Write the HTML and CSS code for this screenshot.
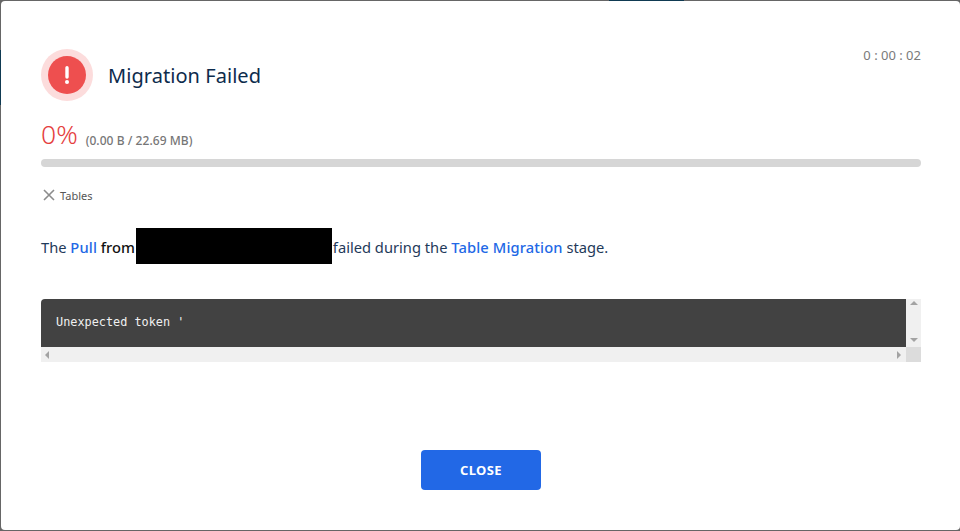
FILE: index.html
```html
<!DOCTYPE html>
<html lang="en">
<head>
<meta charset="utf-8">
<title>Migration Failed</title>
<link rel="stylesheet" href="styles.css">
</head>
<body>
<span class="sliver sliver-top"></span>
<span class="sliver sliver-left"></span>
<main class="modal">
  <header class="head">
    <div class="title-wrap">
      <span class="status-icon">
        <svg width="52" height="52" viewBox="0 0 52 52" aria-hidden="true">
          <circle cx="26" cy="26" r="26" fill="#fcdcdc"/>
          <circle cx="26" cy="26" r="19" fill="#ee4f4f"/>
          <path d="M26 18.800v9.200" stroke="#fff" stroke-width="3.400" stroke-linecap="round"/>
          <circle cx="26" cy="33" r="2" fill="#fff"/>
        </svg>
      </span>
      <h1 class="title">Migration Failed</h1>
    </div>
    <div class="timer">0 : 00 : 02</div>
  </header>
  <div class="progress-text"><span class="percent">0%</span><span class="size">(0.00 B / 22.69 MB)</span></div>
  <div class="bar"></div>
  <div class="stage">
    <svg class="x" width="12" height="12" viewBox="0 0 12 12" aria-hidden="true"><path d="M1 1l10 10M11 1L1 11" stroke="#8c8c8c" stroke-width="1.600"/></svg>
    <span>Tables</span>
  </div>
  <p class="message"><span class="msg-text">The <span class="hl">Pull</span> <span class="strong">from</span></span><span class="redact"></span><span class="msg-text">failed during the <span class="hl">Table Migration</span> stage.</span></p>
  <div class="log">
    <div class="log-main">
      <pre class="log-text">Unexpected token '</pre>
      <div class="vbar"><i class="tri up"></i><i class="tri down"></i></div>
    </div>
    <div class="log-foot">
      <div class="hbar"><i class="tri left"></i><i class="tri right"></i></div>
      <div class="corner"></div>
    </div>
  </div>
  <div class="actions"><button class="close" type="button">CLOSE</button></div>
</main>
</body>
</html>
```

FILE: styles.css
```css
* { box-sizing: border-box; }
html, body { margin: 0; height: 531px; overflow: hidden; }
body { background: #666; font-family: "Noto Sans", sans-serif; position: relative; }
.sliver { position: absolute; background: #0f3a52; z-index: 2; }
.sliver-top { left: 609px; top: 0; width: 75px; height: 1px; }
.sliver-left { left: 0; top: 50px; width: 1px; height: 55px; }
.modal {
  margin: 1px 0 1px 1px;
  height: 529px;
  background: #fff;
  border-radius: 4px;
  padding: 48px 39px 0 40px;
  display: flex;
  flex-direction: column;
}
.head { display: flex; justify-content: space-between; align-items: flex-start; height: 52px; }
.title-wrap { display: flex; align-items: flex-start; gap: 15px; }
.status-icon { display: block; width: 52px; height: 52px; }
.status-icon svg { display: block; }
.title { margin: 1px 0 0; font-size: 20px; font-weight: 400; line-height: 52px; letter-spacing: 0.05px; color: #0d2b4c; }
.timer { font-size: 13px; line-height: 12px; color: #7a7a7a; }
.progress-text { display: flex; align-items: flex-start; margin-top: 18px; height: 32px; }
.percent { font-size: 26.500px; font-weight: 300; line-height: 30px; color: #e53e3e; }
.size { margin: 14px 0 0 8px; font-size: 12px; line-height: 16px; font-weight: 500; color: #767676; letter-spacing: 0.05px; }
.bar { height: 8px; margin-top: 8px; background: #d6d6d6; border-radius: 4px; }
.stage { display: flex; align-items: center; gap: 5px; margin-top: 20px; margin-left: 2px; height: 16px; font-size: 11px; color: #555; }
.x { display: block; }
.message { margin: 25px 0 0; height: 36px; display: flex; align-items: center; white-space: pre; font-size: 14.700px; color: #1f3a5a; }
.msg-text { display: block; padding-top: 2px; }
.hl { color: #2268e6; font-weight: 500; letter-spacing: 0.13px; }
.strong { color: #111; font-weight: 500; }
.redact { display: block; width: 196px; height: 36px; margin: 0 1px 0 1px; background: #000; }
.log { margin-top: 35px; height: 63px; display: flex; flex-direction: column; }
.log-main { display: flex; height: 48px; }
.log-text {
  flex: 1;
  margin: 0;
  padding: 14px 15px;
  background: #424242;
  border-radius: 4px 0 0 0;
  font-family: "DejaVu Sans Mono", monospace;
  font-size: 11.850px;
  line-height: 18px;
  color: #f0f0f0;
}
.vbar { width: 15px; background: #f0f0f0; position: relative; }
.log-foot { display: flex; height: 15px; }
.hbar { flex: 1; background: #f0f0f0; position: relative; }
.corner { width: 15px; background: #dcdcdc; }
.tri { position: absolute; width: 0; height: 0; border: 4px solid transparent; }
.tri.up { left: 4px; top: 2px; border-top: 0; border-bottom-color: #a3a3a3; }
.tri.down { left: 4px; bottom: 5px; border-bottom: 0; border-top-color: #a3a3a3; }
.tri.left { left: 4px; top: 4px; border-left: 0; border-right-color: #a3a3a3; }
.tri.right { right: 5px; top: 4px; border-right: 0; border-left-color: #a3a3a3; }
.actions { display: flex; justify-content: center; margin-top: 88px; }
.close {
  width: 120px;
  height: 40px;
  border: 0;
  border-radius: 4px;
  background: #2268e6;
  color: #fff;
  font-family: "Noto Sans", sans-serif;
  font-size: 13px;
  font-weight: 700;
  letter-spacing: 0.4px;
}
```
